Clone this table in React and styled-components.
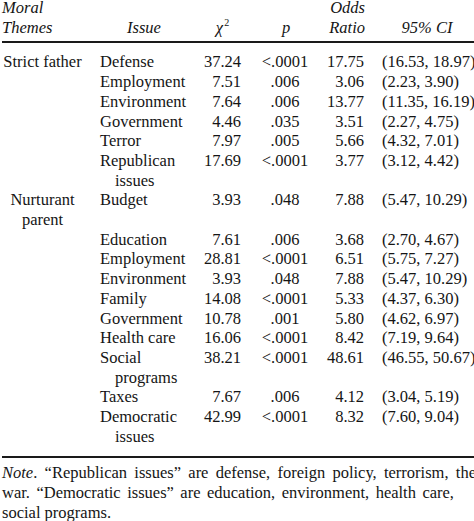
import React from 'react';
import styled, { createGlobalStyle } from 'styled-components';

const GlobalStyle = createGlobalStyle`
  html, body {
    margin: 0;
    background: #ffffff;
    overflow: hidden;
  }
  body {
    font-family: "Liberation Serif", "Times New Roman", serif;
    color: #151515;
  }
`;

const Page = styled.div`
  width: 482px;
  margin: -2px 0 0 2px;
  font-family: "Liberation Serif", "Times New Roman", serif;
  font-size: 16.5px;
`;

const Table = styled.table`
  border-collapse: collapse;
  table-layout: fixed;
  width: 480px;
  font-family: inherit;
  font-size: inherit;
  line-height: 19.7px;
  border-bottom: 2px solid #1a1a1a;
`;

const HeadCell = styled.th`
  font-weight: normal;
  font-style: italic;
  vertical-align: bottom;
  text-align: ${(p) => p.$align || 'center'};
  padding: 0 ${(p) => p.$pr || 0}px 4px ${(p) => p.$pl || 0}px;
  border-bottom: 2px solid #1a1a1a;
`;

const Cell = styled.td`
  vertical-align: top;
  text-align: ${(p) => p.$align || 'left'};
  padding: ${(p) => (p.$first ? 9 : 0)}px ${(p) => p.$pr || 0}px
    ${(p) => (p.$last ? 10 : 0)}px ${(p) => p.$pl || 0}px;
  text-indent: ${(p) => p.$indent || 0}px;
`;

const Sup = styled.sup`
  font-size: 10px;
  font-style: normal;
  vertical-align: 7px;
  line-height: 0;
  margin-left: 1px;
`;

const Note = styled.div`
  padding-top: 5px;
  line-height: 20px;
`;

const NoteLine = styled.span`
  display: block;
  width: ${(p) => p.$width}px;
  white-space: nowrap;
  text-align: ${(p) => (p.$justify ? 'justify' : 'left')};
  text-align-last: ${(p) => (p.$justify ? 'justify' : 'left')};
`;

const cols = [
  { width: 95, align: 'center', pr: 14 },
  { width: 100, align: 'left', pl: 18, indent: -15 },
  { width: 47, align: 'right', pr: 3 },
  { width: 82, align: 'center' },
  { width: 42, align: 'right', pr: 4 },
  { width: 114, align: 'left', pl: 14 },
];

const rows = [
  ['Strict father', 'Defense', '37.24', '<.0001', '17.75', '(16.53, 18.97)'],
  ['', 'Employment', '7.51', '.006', '3.06', '(2.23, 3.90)'],
  ['', 'Environment', '7.64', '.006', '13.77', '(11.35, 16.19)'],
  ['', 'Government', '4.46', '.035', '3.51', '(2.27, 4.75)'],
  ['', 'Terror', '7.97', '.005', '5.66', '(4.32, 7.01)'],
  ['', 'Republican issues', '17.69', '<.0001', '3.77', '(3.12, 4.42)'],
  ['Nurturant parent', 'Budget', '3.93', '.048', '7.88', '(5.47, 10.29)'],
  ['', 'Education', '7.61', '.006', '3.68', '(2.70, 4.67)'],
  ['', 'Employment', '28.81', '<.0001', '6.51', '(5.75, 7.27)'],
  ['', 'Environment', '3.93', '.048', '7.88', '(5.47, 10.29)'],
  ['', 'Family', '14.08', '<.0001', '5.33', '(4.37, 6.30)'],
  ['', 'Government', '10.78', '.001', '5.80', '(4.62, 6.97)'],
  ['', 'Health care', '16.06', '<.0001', '8.42', '(7.19, 9.64)'],
  ['', 'Social programs', '38.21', '<.0001', '48.61', '(46.55, 50.67)'],
  ['', 'Taxes', '7.67', '.006', '4.12', '(3.04, 5.19)'],
  ['', 'Democratic issues', '42.99', '<.0001', '8.32', '(7.60, 9.04)'],
];

export default function App() {
  return (
    <>
      <GlobalStyle />
      <Page>
        <Table>
          <colgroup>
            {cols.map((c, i) => (
              <col key={i} style={{ width: c.width }} />
            ))}
          </colgroup>
          <thead>
            <tr>
              <HeadCell $align="left">
                Moral
                <br />
                Themes
              </HeadCell>
              <HeadCell $pr={6}>Issue</HeadCell>
              <HeadCell $pl={4}>
                χ<Sup>2</Sup>
              </HeadCell>
              <HeadCell $pl={2}>p</HeadCell>
              <HeadCell $align="right" $pr={3}>
                Odds
                <br />
                Ratio
              </HeadCell>
              <HeadCell $pl={14} $pr={10}>
                95% CI
              </HeadCell>
            </tr>
          </thead>
          <tbody>
            {rows.map((r, ri) => (
              <tr key={ri}>
                {r.map((v, ci) => (
                  <Cell
                    key={ci}
                    $align={cols[ci].align}
                    $pl={cols[ci].pl}
                    $pr={cols[ci].pr}
                    $indent={cols[ci].indent}
                    $first={ri === 0}
                    $last={ri === rows.length - 1}
                  >
                    {v}
                  </Cell>
                ))}
              </tr>
            ))}
          </tbody>
        </Table>
        <Note>
          <NoteLine $width={474} $justify>
            <i>Note</i>. “Republican issues” are defense, foreign policy, terrorism, the
          </NoteLine>
          <NoteLine $width={452} $justify>
            war. “Democratic issues” are education, environment, health care,
          </NoteLine>
          <NoteLine $width={452}>social programs.</NoteLine>
        </Note>
      </Page>
    </>
  );
}
